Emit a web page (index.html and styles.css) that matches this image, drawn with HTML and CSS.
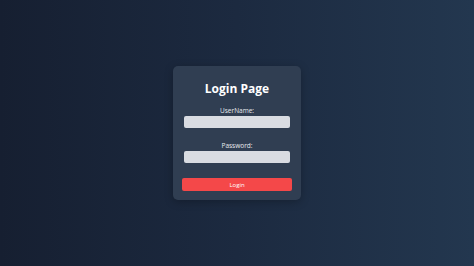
FILE: index.html
```html
<html>
  <head>
    <link rel="stylesheet" href="styles.css">
  </head>
  <body>
    <div class='wrap'>
      <form class='card'>
        <h1>Login Page</h1>
        <div class='field'>
          <label for='user'>UserName:</label>
          <input type='text' id='user'/>
        </div>
        <div class='field'>
          <label for='pass'>Password:</label>
          <input type='password' id='pass'/>
        </div>
        <button type='button' class='btn'>Login</button>
      </form>
    </div>
  </body>
</html>
```

FILE: styles.css
```css
body {
  margin: 0;
  font-family: "Open Sans", "Liberation Sans", sans-serif;
  background: linear-gradient(90deg, #161f31 0%, #1c2a40 50%, #23374f 100%);
  color: #fff;
}
.wrap {
  height: 100vh;
  display: flex;
  align-items: center;
  justify-content: center;
}
.card {
  width: 128px;
  box-sizing: border-box;
  padding: 15px 9px 9px;
  margin: 0;
  background: #303e52;
  border-radius: 5px;
  box-shadow: 0 2px 8px rgba(0, 0, 0, 0.25);
  display: flex;
  flex-direction: column;
  align-items: center;
}
h1 {
  font-size: 12px;
  line-height: 16px;
  font-weight: 700;
  margin: 0 0 9px;
}
.field {
  display: flex;
  flex-direction: column;
  align-items: center;
  width: 106px;
  margin-bottom: 13px;
}
.field label {
  font-size: 6.5px;
  line-height: 9px;
  margin-bottom: 1px;
  color: #e8eaee;
}
.field input {
  width: 106px;
  height: 12px;
  box-sizing: border-box;
  border: none;
  border-radius: 2px;
  background: #d9dce2;
  padding: 0;
}
.btn {
  width: 110px;
  height: 13px;
  margin-top: 2px;
  border: none;
  border-radius: 2px;
  background: #f44849;
  color: #fff;
  font-family: inherit;
  font-size: 6px;
  padding: 0;
}
```
